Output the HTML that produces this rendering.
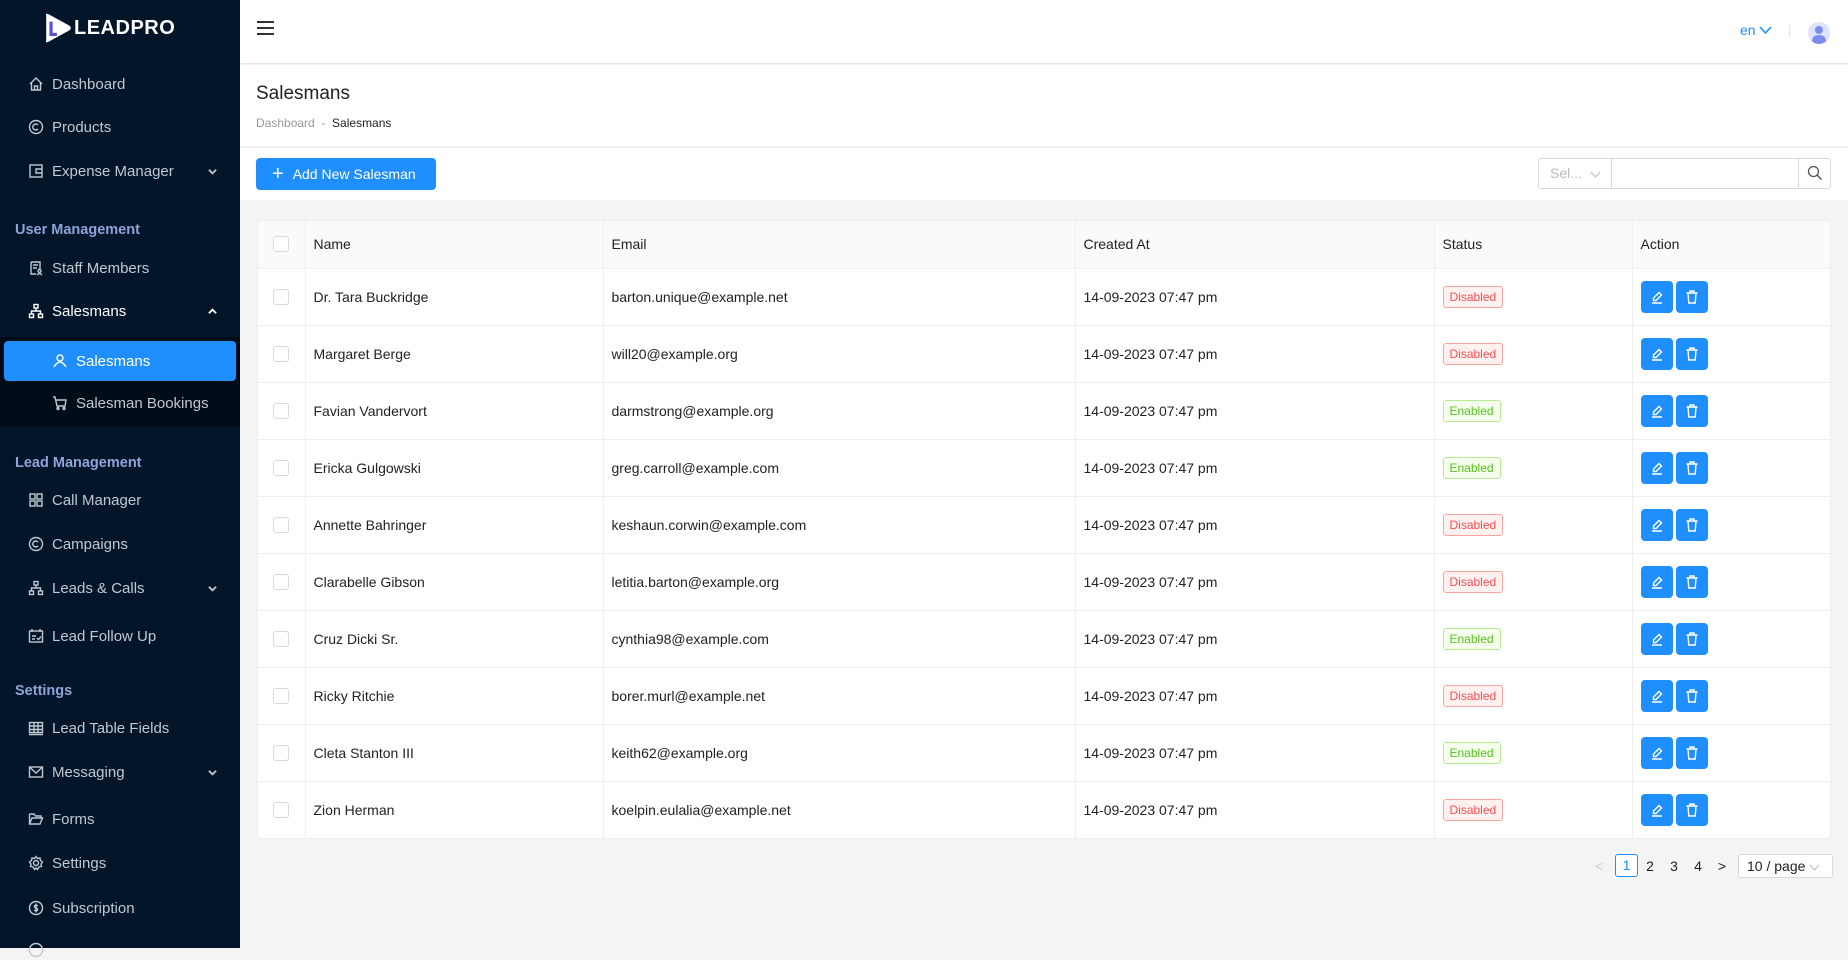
<!DOCTYPE html>
<html><head><meta charset="utf-8">
<style>
*{box-sizing:border-box;margin:0;padding:0}
body{width:1848px;height:948px;overflow:hidden;font-family:"Liberation Sans",sans-serif;background:#f4f4f4;position:relative;color:#222}
.sb{position:absolute;left:0;top:0;width:240px;height:948px;background:#021529}
.sub{position:absolute;left:0;top:337px;width:240px;height:89px;background:#000c17}
.it{position:absolute;left:28px;color:#c2c8d1;font-size:15px;display:flex;align-items:center;height:20px;width:200px;white-space:nowrap}
.it svg{width:16px;height:16px;margin-right:8px;stroke:#c2c8d1;fill:none;stroke-width:1.4;flex:none}
.it .ch{position:absolute;left:180px;width:9px;height:9px}
.sec{position:absolute;left:15px;color:#8ea4d9;font-size:14.5px;font-weight:bold}
.act{position:absolute;left:4px;top:341px;width:232px;height:40px;background:#1f8eff;border-radius:4px}
.hd{position:absolute;left:240px;top:0;right:0;height:64px;background:#fff;border-bottom:1px solid #e8e8e8}
.ph{position:absolute;left:240px;top:65px;right:0;height:82px;background:#fff;border-bottom:1px solid #eee}
.br{position:absolute;left:240px;top:148px;right:0;height:52px;background:#fff}
.tbl{position:absolute;left:257px;top:220px;width:1574px;background:#fff;border:1px solid #eee;border-radius:4px}
table{border-collapse:collapse;width:100%;font-size:14px}
th{background:#fafafa;font-weight:normal;text-align:left;height:47px;padding-left:8px;border-right:1px solid #eee;border-bottom:1px solid #eee;color:#222}
td{height:57px;padding-left:8px;border-right:1px solid #eee;border-bottom:1px solid #eee;color:#222}
tr:last-child td{border-bottom:none}
th:last-child,td:last-child{border-right:none}
.cb{width:16px;height:16px;border:1px solid #d9d9d9;border-radius:3px;background:#fff;margin-left:7px}
.tag{display:inline-block;font-size:12px;padding:0 6px;height:22px;line-height:20px;border-radius:3px;border:1px solid}
.dis{color:#ff4d4f;background:#fff1f0;border-color:#ffa39e}
.en{color:#52c41a;background:#f6ffed;border-color:#b7eb8f}
.ab{display:inline-flex;align-items:center;justify-content:center;width:32px;height:32px;background:#1f8eff;border-radius:4px;margin-right:3px;vertical-align:middle}
.ab svg{width:16px;height:16px;stroke:#fff;fill:none;stroke-width:1.4}
</style></head><body>
<div class="sb">
 <div style="position:absolute;left:44px;top:13px;display:flex;align-items:center">
  <svg width="28" height="30" viewBox="0 0 26 28"><path d="M2 2 Q1 0 4 1 L24 12 Q26 14 24 16 L4 27 Q1 28 2 26Z" fill="#fff"/><path d="M6.5 8 V20 H12" stroke="#5b52d6" stroke-width="3" fill="none"/></svg>
  <span style="color:#fff;font-weight:bold;font-size:20px;margin-left:2px;letter-spacing:.5px">LEADPRO</span>
 </div>
 <div class="sub"></div>
 <div class="act"></div>
 <div class="it" style="top:74px"><svg viewBox="0 0 16 16"><path d="M2 8 L8 2 L14 8 M3.5 7 V14 H12.5 V7 M6.5 14 V10 H9.5 V14"/></svg>Dashboard</div>
 <div class="it" style="top:117px"><svg viewBox="0 0 16 16"><circle cx="8" cy="8" r="6.5"/><path d="M10 6 A3 3 0 1 0 10 10"/></svg>Products</div>
 <div class="it" style="top:161px"><svg viewBox="0 0 16 16"><rect x="2" y="2" width="12" height="12"/><path d="M14 6 H8 V10 H14"/></svg>Expense Manager<svg class="ch" viewBox="0 0 10 10"><path d="M1 3 L5 7 L9 3" stroke-width="2"/></svg></div>
 <div class="sec" style="top:222px">User Management</div>
 <div class="it" style="top:258px"><svg viewBox="0 0 16 16"><path d="M3 2 H12 V9 M3 2 V14 H8 M5 5 H10 M5 8 H9"/><circle cx="11.5" cy="11" r="1.5"/><path d="M9 15 Q11.5 12 14 15"/></svg>Staff Members</div>
 <div class="it" style="top:301px;color:#fff"><svg viewBox="0 0 16 16" style="stroke:#fff"><rect x="6" y="1.5" width="4" height="3.5"/><rect x="1.5" y="11" width="4" height="3.5"/><rect x="10.5" y="11" width="4" height="3.5"/><path d="M8 5 V8 M3.5 11 V8 H12.5 V11"/></svg>Salesmans<svg class="ch" viewBox="0 0 10 10" style="stroke:#fff"><path d="M1 7 L5 3 L9 7" stroke-width="2"/></svg></div>
 <div class="it" style="top:351px;left:52px;color:#fff"><svg viewBox="0 0 16 16" style="stroke:#fff"><circle cx="8" cy="5" r="3"/><path d="M2 14 Q8 4 14 14"/></svg>Salesmans</div>
 <div class="it" style="top:393px;left:52px"><svg viewBox="0 0 16 16"><path d="M1 2 H3 L5 11 H13 L14 5 H4"/><circle cx="6" cy="13.5" r="1"/><circle cx="12" cy="13.5" r="1"/></svg>Salesman Bookings</div>
 <div class="sec" style="top:455px">Lead Management</div>
 <div class="it" style="top:490px"><svg viewBox="0 0 16 16"><rect x="2" y="2" width="5" height="5"/><rect x="9" y="2" width="5" height="5"/><rect x="2" y="9" width="5" height="5"/><rect x="9" y="9" width="5" height="5"/></svg>Call Manager</div>
 <div class="it" style="top:534px"><svg viewBox="0 0 16 16"><circle cx="8" cy="8" r="6.5"/><path d="M10 6 A3 3 0 1 0 10 10"/></svg>Campaigns</div>
 <div class="it" style="top:578px"><svg viewBox="0 0 16 16"><rect x="6" y="1.5" width="4" height="3.5"/><rect x="1.5" y="11" width="4" height="3.5"/><rect x="10.5" y="11" width="4" height="3.5"/><path d="M8 5 V8 M3.5 11 V8 H12.5 V11"/></svg>Leads &amp; Calls<svg class="ch" viewBox="0 0 10 10"><path d="M1 3 L5 7 L9 3" stroke-width="2"/></svg></div>
 <div class="it" style="top:626px"><svg viewBox="0 0 16 16"><rect x="1.5" y="3" width="13" height="11"/><path d="M4 1 V4 M12 1 V4 M4 8 H8 M4 11 H7 M9 10 L10.5 11.5 L13 8.5"/></svg>Lead Follow Up</div>
 <div class="sec" style="top:683px">Settings</div>
 <div class="it" style="top:718px"><svg viewBox="0 0 16 16"><rect x="1.5" y="2.5" width="13" height="10"/><path d="M1.5 6 H14.5 M1.5 9.5 H14.5 M6 2.5 V12.5 M10 2.5 V12.5 M1 14.5 H15"/></svg>Lead Table Fields</div>
 <div class="it" style="top:762px"><svg viewBox="0 0 16 16"><rect x="1.5" y="3" width="13" height="10"/><path d="M1.5 3 L8 9 L14.5 3"/></svg>Messaging<svg class="ch" viewBox="0 0 10 10"><path d="M1 3 L5 7 L9 3" stroke-width="2"/></svg></div>
 <div class="it" style="top:809px"><svg viewBox="0 0 16 16"><path d="M1.5 3 H6 L7.5 5 H13 V7 M1.5 3 V13 H12 L14.5 7 H4 L1.5 13"/></svg>Forms</div>
 <div class="it" style="top:853px"><svg viewBox="0 0 16 16"><circle cx="8" cy="8" r="2.5"/><path d="M8 1.5 L9.5 3.5 L12 3 L12.5 5.5 L14.5 7 L13 9 L13.5 11.5 L11 12 L9.5 14.5 L8 13 L6.5 14.5 L5 12 L2.5 11.5 L3 9 L1.5 7 L3.5 5.5 L4 3 L6.5 3.5Z"/></svg>Settings</div>
 <div class="it" style="top:898px"><svg viewBox="0 0 16 16"><circle cx="8" cy="8" r="6.5"/><path d="M10 6 Q8 4.5 6.5 5.8 Q6 7.5 8 8 Q10 8.5 9.5 10.2 Q8 11.5 6 10 M8 3.5 V12.5"/></svg>Subscription</div>
 <div class="it" style="top:940px"><svg viewBox="0 0 16 16"><circle cx="8" cy="8" r="6.5"/></svg></div>
</div>
<div class="hd">
 <div style="position:absolute;left:17px;top:21px;width:17px;height:14px;border-top:2px solid #333;border-bottom:2px solid #333"><div style="margin-top:4px;height:2px;background:#333"></div></div>
 <div style="position:absolute;left:1500px;top:22px;color:#1f8eff;font-size:14px">en <svg width="13" height="9" viewBox="0 0 13 9"><path d="M1 1 L6.5 7 L12 1" stroke="#1f8eff" stroke-width="1.6" fill="none"/></svg></div>
 <div style="position:absolute;left:1549px;top:25px;width:1px;height:13px;background:#e5e5e5"></div>
 <div style="position:absolute;left:1568px;top:22px;width:22px;height:22px;border-radius:50%;background:#dde3fb;overflow:hidden"><div style="position:absolute;left:7px;top:4px;width:8px;height:8px;border-radius:50%;background:#7b8cf0"></div><div style="position:absolute;left:4px;top:13px;width:14px;height:10px;border-radius:6px 6px 0 0;background:#7b8cf0"></div></div>
</div>
<div class="ph">
 <div style="position:absolute;left:16px;top:18px;font-size:19px;color:#222">Salesmans</div>
 <div style="position:absolute;left:16px;top:51px;font-size:12px;color:#999">Dashboard &nbsp;-&nbsp; <span style="color:#222">Salesmans</span></div>
</div>
<div class="br">
 <div style="position:absolute;left:16px;top:10px;width:180px;height:32px;background:#1f8eff;border-radius:4px;color:#fff;font-size:14px;display:flex;align-items:center;padding-left:16px"><span style="font-size:20px;margin-right:9px;font-weight:300">+</span>Add New Salesman</div>
 <div style="position:absolute;left:1298px;top:10px;width:293px;height:31px;border:1px solid #d9d9d9;border-radius:3px;background:#fff">
  <div style="position:absolute;left:0;top:0;width:73px;height:29px;border-right:1px solid #d9d9d9;color:#bbb;font-size:14px;padding:6px 11px;white-space:nowrap">Sel... <svg width="11" height="7" viewBox="0 0 11 7" style="margin-left:4px"><path d="M1 1 L5.5 6 L10 1" stroke="#bbb" fill="none"/></svg></div>
  <div style="position:absolute;left:259px;top:0;width:32px;height:29px;border-left:1px solid #d9d9d9"><svg width="16" height="16" viewBox="0 0 16 16" style="margin:6px 8px"><circle cx="6.5" cy="6.5" r="5" stroke="#555" stroke-width="1.3" fill="none"/><path d="M10 10 L14.5 14.5" stroke="#555" stroke-width="1.4"/></svg></div>
 </div>
</div>
<div class="tbl"><table>
<colgroup><col style="width:47px"><col style="width:298px"><col style="width:472px"><col style="width:359px"><col style="width:198px"><col></colgroup>
<tr><th><div class="cb"></div></th><th>Name</th><th>Email</th><th>Created At</th><th>Status</th><th>Action</th></tr>
<tr><td><div class="cb"></div></td><td>Dr. Tara Buckridge</td><td>barton.unique@example.net</td><td>14-09-2023 07:47 pm</td><td><span class="tag dis">Disabled</span></td><td><span class="ab"><svg viewBox="0 0 16 16"><path d="M3 14 H13 M4.5 11.5 V9 L10 3.5 L12.5 6 L7 11.5Z"/></svg></span><span class="ab"><svg viewBox="0 0 16 16"><path d="M2.5 4 H13.5 M6 4 V2 H10 V4 M4 4 L4.8 14 H11.2 L12 4"/></svg></span></td></tr>
<tr><td><div class="cb"></div></td><td>Margaret Berge</td><td>will20@example.org</td><td>14-09-2023 07:47 pm</td><td><span class="tag dis">Disabled</span></td><td><span class="ab"><svg viewBox="0 0 16 16"><path d="M3 14 H13 M4.5 11.5 V9 L10 3.5 L12.5 6 L7 11.5Z"/></svg></span><span class="ab"><svg viewBox="0 0 16 16"><path d="M2.5 4 H13.5 M6 4 V2 H10 V4 M4 4 L4.8 14 H11.2 L12 4"/></svg></span></td></tr>
<tr><td><div class="cb"></div></td><td>Favian Vandervort</td><td>darmstrong@example.org</td><td>14-09-2023 07:47 pm</td><td><span class="tag en">Enabled</span></td><td><span class="ab"><svg viewBox="0 0 16 16"><path d="M3 14 H13 M4.5 11.5 V9 L10 3.5 L12.5 6 L7 11.5Z"/></svg></span><span class="ab"><svg viewBox="0 0 16 16"><path d="M2.5 4 H13.5 M6 4 V2 H10 V4 M4 4 L4.8 14 H11.2 L12 4"/></svg></span></td></tr>
<tr><td><div class="cb"></div></td><td>Ericka Gulgowski</td><td>greg.carroll@example.com</td><td>14-09-2023 07:47 pm</td><td><span class="tag en">Enabled</span></td><td><span class="ab"><svg viewBox="0 0 16 16"><path d="M3 14 H13 M4.5 11.5 V9 L10 3.5 L12.5 6 L7 11.5Z"/></svg></span><span class="ab"><svg viewBox="0 0 16 16"><path d="M2.5 4 H13.5 M6 4 V2 H10 V4 M4 4 L4.8 14 H11.2 L12 4"/></svg></span></td></tr>
<tr><td><div class="cb"></div></td><td>Annette Bahringer</td><td>keshaun.corwin@example.com</td><td>14-09-2023 07:47 pm</td><td><span class="tag dis">Disabled</span></td><td><span class="ab"><svg viewBox="0 0 16 16"><path d="M3 14 H13 M4.5 11.5 V9 L10 3.5 L12.5 6 L7 11.5Z"/></svg></span><span class="ab"><svg viewBox="0 0 16 16"><path d="M2.5 4 H13.5 M6 4 V2 H10 V4 M4 4 L4.8 14 H11.2 L12 4"/></svg></span></td></tr>
<tr><td><div class="cb"></div></td><td>Clarabelle Gibson</td><td>letitia.barton@example.org</td><td>14-09-2023 07:47 pm</td><td><span class="tag dis">Disabled</span></td><td><span class="ab"><svg viewBox="0 0 16 16"><path d="M3 14 H13 M4.5 11.5 V9 L10 3.5 L12.5 6 L7 11.5Z"/></svg></span><span class="ab"><svg viewBox="0 0 16 16"><path d="M2.5 4 H13.5 M6 4 V2 H10 V4 M4 4 L4.8 14 H11.2 L12 4"/></svg></span></td></tr>
<tr><td><div class="cb"></div></td><td>Cruz Dicki Sr.</td><td>cynthia98@example.com</td><td>14-09-2023 07:47 pm</td><td><span class="tag en">Enabled</span></td><td><span class="ab"><svg viewBox="0 0 16 16"><path d="M3 14 H13 M4.5 11.5 V9 L10 3.5 L12.5 6 L7 11.5Z"/></svg></span><span class="ab"><svg viewBox="0 0 16 16"><path d="M2.5 4 H13.5 M6 4 V2 H10 V4 M4 4 L4.8 14 H11.2 L12 4"/></svg></span></td></tr>
<tr><td><div class="cb"></div></td><td>Ricky Ritchie</td><td>borer.murl@example.net</td><td>14-09-2023 07:47 pm</td><td><span class="tag dis">Disabled</span></td><td><span class="ab"><svg viewBox="0 0 16 16"><path d="M3 14 H13 M4.5 11.5 V9 L10 3.5 L12.5 6 L7 11.5Z"/></svg></span><span class="ab"><svg viewBox="0 0 16 16"><path d="M2.5 4 H13.5 M6 4 V2 H10 V4 M4 4 L4.8 14 H11.2 L12 4"/></svg></span></td></tr>
<tr><td><div class="cb"></div></td><td>Cleta Stanton III</td><td>keith62@example.org</td><td>14-09-2023 07:47 pm</td><td><span class="tag en">Enabled</span></td><td><span class="ab"><svg viewBox="0 0 16 16"><path d="M3 14 H13 M4.5 11.5 V9 L10 3.5 L12.5 6 L7 11.5Z"/></svg></span><span class="ab"><svg viewBox="0 0 16 16"><path d="M2.5 4 H13.5 M6 4 V2 H10 V4 M4 4 L4.8 14 H11.2 L12 4"/></svg></span></td></tr>
<tr><td><div class="cb"></div></td><td>Zion Herman</td><td>koelpin.eulalia@example.net</td><td>14-09-2023 07:47 pm</td><td><span class="tag dis">Disabled</span></td><td><span class="ab"><svg viewBox="0 0 16 16"><path d="M3 14 H13 M4.5 11.5 V9 L10 3.5 L12.5 6 L7 11.5Z"/></svg></span><span class="ab"><svg viewBox="0 0 16 16"><path d="M2.5 4 H13.5 M6 4 V2 H10 V4 M4 4 L4.8 14 H11.2 L12 4"/></svg></span></td></tr>
</table></div>
<div style="position:absolute;top:854px;left:1595px;font-size:14px;color:#222;display:flex;align-items:center;height:23px">
 <span style="color:#ccc;width:20px">&lt;</span>
 <span style="width:23px;height:23px;border:1px solid #1f8eff;border-radius:3px;color:#1f8eff;text-align:center;line-height:21px;background:#fff">1</span>
 <span style="width:24px;text-align:center">2</span><span style="width:24px;text-align:center">3</span><span style="width:24px;text-align:center">4</span>
 <span style="width:24px;text-align:center">&gt;</span>
 <span style="margin-left:4px;width:95px;height:24px;border:1px solid #d9d9d9;border-radius:3px;background:#fff;padding:3px 8px;white-space:nowrap">10 / page <svg width="11" height="7" viewBox="0 0 11 7"><path d="M1 1 L5.5 6 L10 1" stroke="#bbb" fill="none"/></svg></span>
</div>
</body></html>
